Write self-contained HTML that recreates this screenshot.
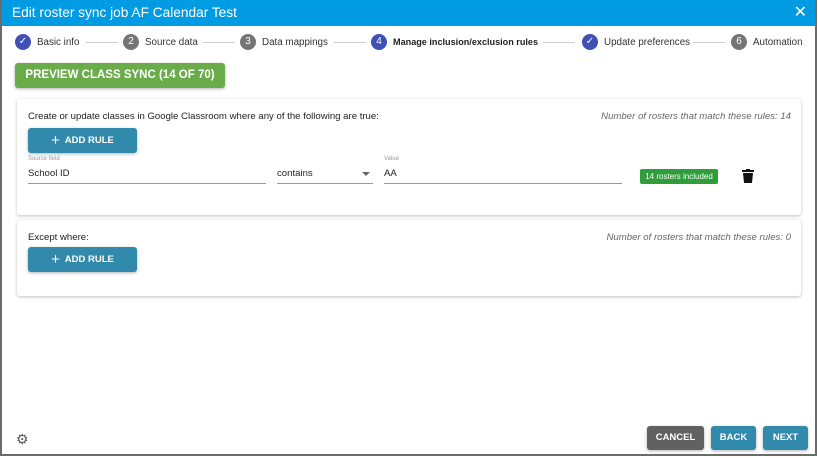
<!DOCTYPE html>
<html><head><style>
*{box-sizing:border-box;margin:0;padding:0}
body{width:818px;height:458px;background:#fff;font-family:"Liberation Sans",sans-serif;position:relative;overflow:hidden}
.frame{position:absolute;left:0;top:0;width:817px;height:456px;border:2px solid #6b6b6b;border-top:none}
.hdr{position:absolute;left:2px;top:0;width:813px;height:26px;background:#009be3;color:#fff;font-size:13.7px;line-height:25px;padding-left:10px}
.x{position:absolute;right:8px;top:0;font-size:16px}
.step{position:absolute;top:34px;height:16px;font-size:9.8px;color:#333;line-height:17px}
.c{display:inline-block;width:16px;height:16px;border-radius:50%;background:#757575;color:#fff;text-align:center;font-size:10px;line-height:16px;margin-right:6px;vertical-align:top;font-weight:normal}
.b{background:#3f51b5}
.line{position:absolute;top:42px;height:1px;background:#ccc}
.btn{position:absolute;color:#fff;font-weight:bold;text-align:center;border-radius:3px;box-shadow:0 1px 3px rgba(0,0,0,.3)}
.card{position:absolute;left:17px;width:784px;background:#fff;box-shadow:0 1px 3px rgba(0,0,0,.25);border-radius:3px}
.t{position:absolute;font-size:9.6px;color:#222}
.it{position:absolute;font-size:9.6px;color:#666;font-style:italic}
.ul{position:absolute;height:1px;background:#999}
</style></head><body>
<div class="frame"></div>
<div class="hdr">Edit roster sync job AF Calendar Test<span class="x">✕</span></div>
<div class="step" style="left:15px"><span class="c b">✓</span>Basic info</div>
<div class="line" style="left:86px;width:32px"></div>
<div class="step" style="left:123px"><span class="c">2</span>Source data</div>
<div class="line" style="left:203px;width:32px"></div>
<div class="step" style="left:240px"><span class="c">3</span>Data mappings</div>
<div class="line" style="left:334px;width:32px"></div>
<div class="step" style="left:371px;color:#222;font-weight:bold;font-size:9.1px"><span class="c b">4</span>Manage inclusion/exclusion rules</div>
<div class="line" style="left:543px;width:32px"></div>
<div class="step" style="left:582px"><span class="c b">✓</span>Update preferences</div>
<div class="line" style="left:693px;width:32px"></div>
<div class="step" style="left:731px"><span class="c">6</span>Automation</div>
<div class="btn" style="left:15px;top:63px;width:210px;height:25px;background:#6aac4a;font-size:11.5px;line-height:25px">PREVIEW CLASS SYNC (14 OF 70)</div>
<div class="card" style="top:99px;height:116px"></div>
<div class="t" style="left:28px;top:111px">Create or update classes in Google Classroom where any of the following are true:</div>
<div class="it" style="right:27px;top:111px">Number of rosters that match these rules: 14</div>
<div class="btn" style="left:28px;top:128px;width:109px;height:25px;background:#3189ab;font-size:9.5px;line-height:25px"><span style="font-size:15px;font-weight:normal;vertical-align:-2px">+</span>&nbsp; ADD RULE</div>
<div class="t" style="left:28px;top:156px;font-size:6px;color:#999">Source field</div>
<div class="t" style="left:28px;top:168px">School ID</div>
<div class="ul" style="left:28px;top:183px;width:238px"></div>
<div class="t" style="left:277px;top:168px">contains</div>
<div style="position:absolute;left:362px;top:172px;width:0;height:0;border-left:4px solid transparent;border-right:4px solid transparent;border-top:4px solid #666"></div>
<div class="ul" style="left:277px;top:183px;width:96px"></div>
<div class="t" style="left:384px;top:156px;font-size:6px;color:#999">Value</div>
<div class="t" style="left:384px;top:168px">AA</div>
<div class="ul" style="left:384px;top:183px;width:238px"></div>
<div style="position:absolute;left:640px;top:169px;width:78px;height:15px;background:#2e9d3a;border-radius:2px;color:#fff;font-size:8px;line-height:15px;text-align:center">14 rosters included</div>
<svg style="position:absolute;left:742px;top:169px" width="12" height="14" viewBox="0 0 12 14"><rect x="0" y="1" width="12" height="2" fill="#111"/><rect x="4" y="0" width="4" height="2" fill="#111"/><path d="M1 4h10l-1 10H2z" fill="#111"/></svg>
<div class="card" style="top:220px;height:76px"></div>
<div class="t" style="left:28px;top:232px">Except where:</div>
<div class="it" style="right:27px;top:232px">Number of rosters that match these rules: 0</div>
<div class="btn" style="left:28px;top:247px;width:109px;height:25px;background:#3189ab;font-size:9.5px;line-height:25px"><span style="font-size:15px;font-weight:normal;vertical-align:-2px">+</span>&nbsp; ADD RULE</div>
<div style="position:absolute;left:16px;top:431px;font-size:14px;color:#555">⚙</div>
<div class="btn" style="left:647px;top:426px;width:57px;height:24px;background:#616161;font-size:9.5px;line-height:24px">CANCEL</div>
<div class="btn" style="left:711px;top:426px;width:45px;height:24px;background:#3189ab;font-size:9.5px;line-height:24px">BACK</div>
<div class="btn" style="left:763px;top:426px;width:45px;height:24px;background:#3189ab;font-size:9.5px;line-height:24px">NEXT</div>
</body></html>
